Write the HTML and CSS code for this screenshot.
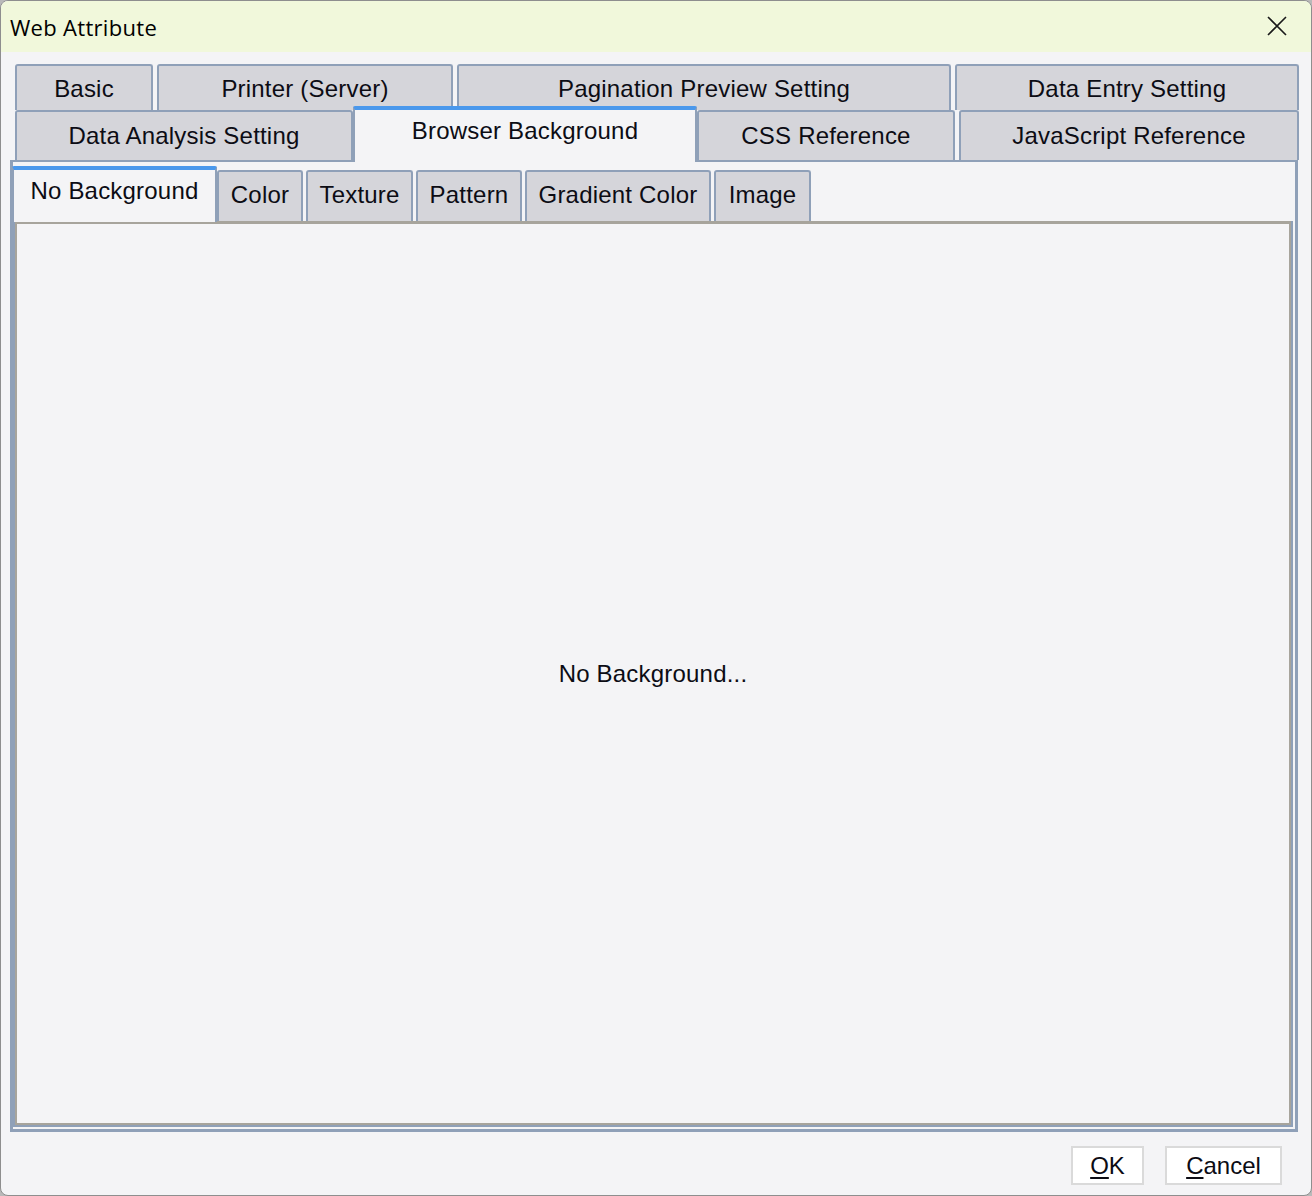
FILE: index.html
```html
<!DOCTYPE html>
<html>
<head>
<meta charset="utf-8">
<link rel="stylesheet" href="styles.css">
</head>
<body>
<div class="window">
  <div class="titlebar">
    <span class="title">Web Attribute</span>
    <span class="close">
      <svg width="20" height="20" viewBox="0 0 20 20"><path d="M1 1 L19 19 M19 1 L1 19" stroke="#1a1a1a" stroke-width="1.6" fill="none"/></svg>
    </span>
  </div>
  <div class="main">
    <div class="tabrows">
      <div class="row row1">
        <div class="tab w-basic">Basic</div>
        <div class="tab w-printer">Printer (Server)</div>
        <div class="tab w-pagination">Pagination Preview Setting</div>
        <div class="tab w-entry">Data Entry Setting</div>
      </div>
      <div class="row row2">
        <div class="tab w-analysis">Data Analysis Setting</div>
        <div class="tab sel w-browser">Browser Background</div>
        <div class="tab w-css">CSS Reference</div>
        <div class="tab w-js">JavaScript Reference</div>
      </div>
    </div>
    <div class="pane">
      <div class="itabs">
        <div class="itab isel w-nobg">No Background</div>
        <div class="itab w-color">Color</div>
        <div class="itab w-texture">Texture</div>
        <div class="itab w-pattern">Pattern</div>
        <div class="itab w-gradient">Gradient Color</div>
        <div class="itab w-image">Image</div>
      </div>
      <div class="ibox">
        <div class="ipanel">No Background...</div>
      </div>
    </div>
  </div>
  <div class="footer">
    <button class="btn w-ok"><u>O</u>K</button>
    <button class="btn w-cancel"><u>C</u>ancel</button>
  </div>
</div>
</body>
</html>
```

FILE: styles.css
```css
html, body {
  margin: 0;
  padding: 0;
  background: #b9b9b9;
}
.window {
  width: 1312px;
  height: 1196px;
  box-sizing: border-box;
  border: 1px solid #8e8e8e;
  border-radius: 8px;
  overflow: hidden;
  background: #f4f4f6;
  display: flex;
  flex-direction: column;
  font-family: "Liberation Sans", Arial, sans-serif;
  color: #111;
}
.titlebar {
  height: 51px;
  flex: none;
  background: #f1f8db;
  display: flex;
  align-items: center;
  justify-content: space-between;
  padding: 0 24px 0 9px;
}
.title {
  font-family: "Open Sans", "Liberation Sans", sans-serif;
  font-size: 22px;
  letter-spacing: 0.3px;
  color: #000;
  padding-top: 1px;
}
.close {
  display: flex;
  width: 20px;
  height: 20px;
  margin-top: -2px;
}
.main {
  padding: 12px 13px 0 9px;
  display: flex;
  flex-direction: column;
}
.tabrows {
  margin-left: 5px;
  margin-right: -1px;
  display: flex;
  flex-direction: column;
}
.row {
  display: flex;
  align-items: flex-end;
}
.row1 {
  gap: 4px;
  height: 46px;
}
.row2 {
  height: 50px;
}
.tab, .itab {
  box-sizing: border-box;
  background: #d5d5da;
  border: 2px solid #8fa0b8;
  border-bottom: none;
  border-radius: 3px 3px 0 0;
  display: flex;
  align-items: center;
  justify-content: center;
  font-size: 24px;
  letter-spacing: 0.2px;
  white-space: nowrap;
  color: #0c0c14;
}
.row1 .tab { height: 46px; padding-top: 2px; }
.row2 .tab { height: 50px; }
.row2 .tab.sel {
  height: 56px;
  margin-top: -4px;
  margin-bottom: -2px;
  z-index: 2;
  background: #f4f4f6;
  border-top: 4px solid #4a98ec;
  padding-bottom: 10px;
  border-radius: 2px 2px 0 0;
}
.w-basic { width: 138px; }
.w-printer { width: 296px; }
.w-pagination { width: 494px; }
.w-entry { width: 344px; }
.w-analysis { width: 338px; }
.w-browser { width: 344px; }
.w-css { width: 258px; }
.w-js { width: 340px; margin-left: 4px; }

.pane {
  box-sizing: border-box;
  height: 972px;
  border: 3px solid #8fa0b8;
  border-top-width: 2px;
  padding: 4px 2px 2px 0;
  display: flex;
  flex-direction: column;
  background: #f4f4f6;
}
.itabs {
  display: flex;
  align-items: flex-end;
  gap: 3px;
  height: 55px;
  flex: none;
  margin-left: -1px;
}
.itab {
  height: 51px;
  padding-bottom: 3px;
}
.itab.isel {
  height: 56px;
  margin-bottom: -1px;
  z-index: 2;
  background: #f4f4f6;
  border-top: 4px solid #4a98ec;
  padding-bottom: 10px;
  border-radius: 2px 2px 0 0;
}
.w-nobg { width: 205px; margin-right: -3px; }
.w-color { width: 86px; }
.w-texture { width: 107px; }
.w-pattern { width: 106px; }
.w-gradient { width: 186px; }
.w-image { width: 97px; }

.ibox {
  flex: 1;
  border: 2px solid #8fa0b8;
  border-top: none;
  display: flex;
}
.ipanel {
  flex: 1;
  border: 2px solid #a7a49c;
  border-top-width: 3px;
  background: #f4f4f6;
  display: flex;
  align-items: center;
  justify-content: center;
  font-size: 24px;
  letter-spacing: 0.2px;
  color: #0c0c14;
}
.footer {
  display: flex;
  justify-content: flex-end;
  gap: 21px;
  padding: 14px 29px 0 0;
}
.btn {
  box-sizing: border-box;
  height: 39px;
  background: #ffffff;
  border: 2px solid #dadada;
  font-family: "Liberation Sans", Arial, sans-serif;
  font-size: 24px;
  color: #0c0c14;
  padding: 0;
  display: flex;
  align-items: center;
  justify-content: center;
}
.btn u {
  text-underline-offset: 3px;
}
.w-ok { width: 73px; }
.w-cancel { width: 117px; }
```
